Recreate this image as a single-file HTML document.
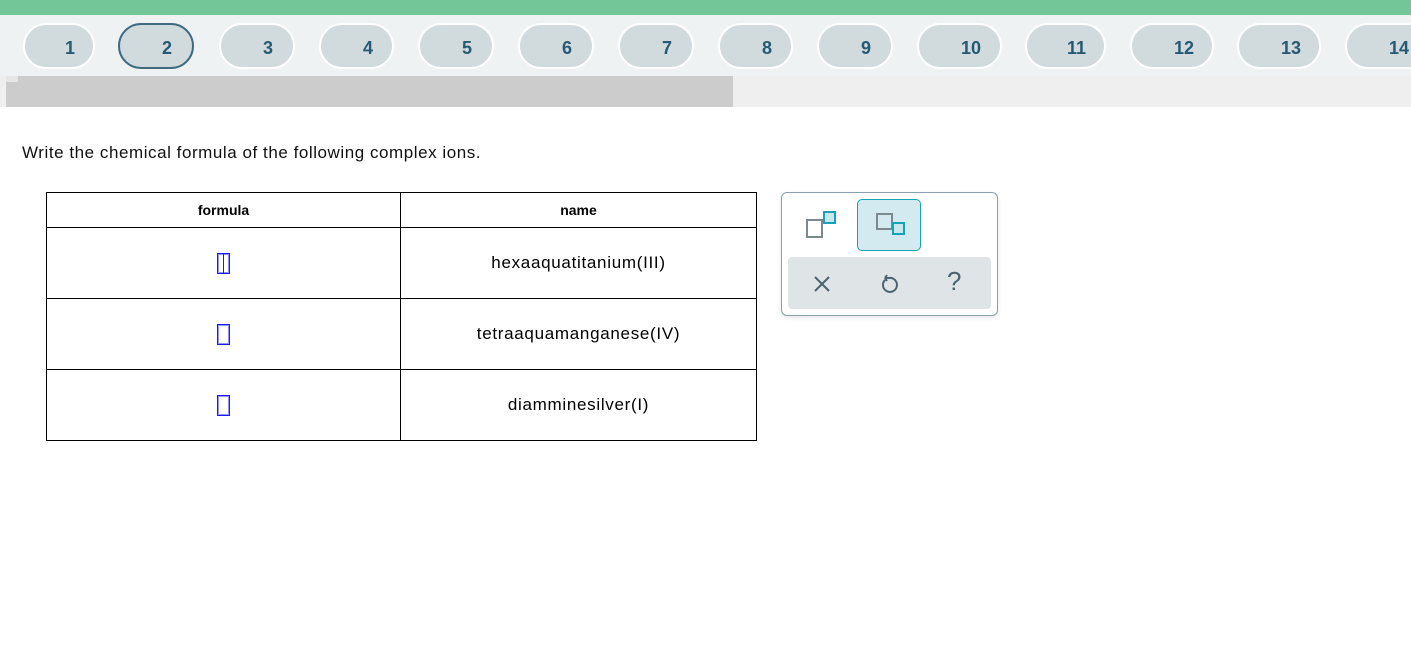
<!DOCTYPE html>
<html><head><style>
body{margin:0;width:1411px;height:671px;background:#fff;font-family:"Liberation Sans",sans-serif;position:relative;overflow:hidden}
.a{position:absolute}
.p{position:absolute;top:23px;height:42px;border:2px solid #fff;border-radius:23px;background:#d1dadd;color:#255a74;font-size:18px;font-weight:bold;line-height:46px;box-sizing:content-box}
.p span{position:absolute;top:0}
table{position:absolute;left:46px;top:192px;border-collapse:collapse;font-size:17px;letter-spacing:0.7px;table-layout:fixed}
td,th{border:1px solid #000;text-align:center;padding:0}
th{height:34px;font-size:14px;letter-spacing:0}
td{height:70px}
.b{display:inline-block;width:11px;height:19px;border:1px solid #1a1aff;box-shadow:inset 0 0 0 1px rgba(40,40,255,.5);vertical-align:middle}
</style></head><body>
<div class="a" style="left:0;top:0;width:1411px;height:15px;background:#72c698"></div>
<div class="a" style="left:0;top:15px;width:1411px;height:61px;background:#eff2f3"></div>
<div class="a" style="left:0;top:76px;width:1411px;height:31px;background:#efefef"></div>
<div class="a" style="left:6px;top:76px;width:727px;height:31px;background:#cccccc"></div>
<div class="a" style="left:6px;top:76px;width:12px;height:6px;background:#e6e6e6"></div>

<div class="p" style="left:23px;width:68px"><span style="left:40px">1</span></div>
<div class="p" style="left:118px;width:72px;border-color:#3f6a80"><span style="left:42px">2</span></div>
<div class="p" style="left:219px;width:72px"><span style="left:42px">3</span></div>
<div class="p" style="left:319px;width:71px"><span style="left:42px">4</span></div>
<div class="p" style="left:418px;width:72px"><span style="left:42px">5</span></div>
<div class="p" style="left:518px;width:72px"><span style="left:42px">6</span></div>
<div class="p" style="left:618px;width:72px"><span style="left:42px">7</span></div>
<div class="p" style="left:718px;width:71px"><span style="left:42px">8</span></div>
<div class="p" style="left:817px;width:72px"><span style="left:42px">9</span></div>
<div class="p" style="left:917px;width:81px"><span style="left:42px">10</span></div>
<div class="p" style="left:1025px;width:77px"><span style="left:40px">11</span></div>
<div class="p" style="left:1130px;width:80px"><span style="left:42px">12</span></div>
<div class="p" style="left:1237px;width:80px"><span style="left:42px">13</span></div>
<div class="p" style="left:1345px;width:90px"><span style="left:42px">14</span></div>

<div class="a" style="left:22px;top:143px;font-size:17px;color:#111;letter-spacing:0.55px">Write the chemical formula of the following complex ions.</div>

<table>
<tr><th style="width:353px">formula</th><th style="width:355px">name</th></tr>
<tr><td><span class="b" style="background:linear-gradient(90deg,transparent 45%,#333 45%,#333 55%,transparent 55%)"></span></td><td>hexaaquatitanium(III)</td></tr>
<tr><td><span class="b"></span></td><td>tetraaquamanganese(IV)</td></tr>
<tr><td><span class="b"></span></td><td>diamminesilver(I)</td></tr>
</table>

<div class="a" style="left:781px;top:192px;width:215px;height:122px;border:1px solid #8aa0aa;border-radius:6px;background:#fff;box-shadow:0 2px 4px rgba(0,0,0,.1)"></div>
<div class="a" style="left:806px;top:219px;width:13px;height:15px;border:2px solid #7c8a90"></div>
<div class="a" style="left:823px;top:211px;width:9px;height:9px;border:2px solid #17a2b8;background:#c9e8ee"></div>
<div class="a" style="left:857px;top:199px;width:62px;height:50px;border:1px solid #17a2b8;border-radius:5px;background:#d3ebf0"></div>
<div class="a" style="left:876px;top:213px;width:13px;height:13px;border:2px solid #7c8a90"></div>
<div class="a" style="left:892px;top:222px;width:9px;height:9px;border:2px solid #17a2b8;background:#c9e8ee"></div>
<div class="a" style="left:788px;top:257px;width:203px;height:52px;border-radius:4px;background:#dfe5e7"></div>
<svg class="a" style="left:812px;top:274px" width="20" height="20"><path d="M3 3L17 17M17 3L3 17" stroke="#4a6470" stroke-width="2"/></svg>
<svg class="a" style="left:878px;top:272px" width="22" height="24"><path d="M7 8A7 7 0 1 0 11 6L7 6M7 6L9 3M7 6L9 9" stroke="#4a6470" stroke-width="2" fill="none"/></svg>
<div class="a" style="left:947px;top:266px;font-size:26px;color:#4a6470">?</div>
</body></html>
